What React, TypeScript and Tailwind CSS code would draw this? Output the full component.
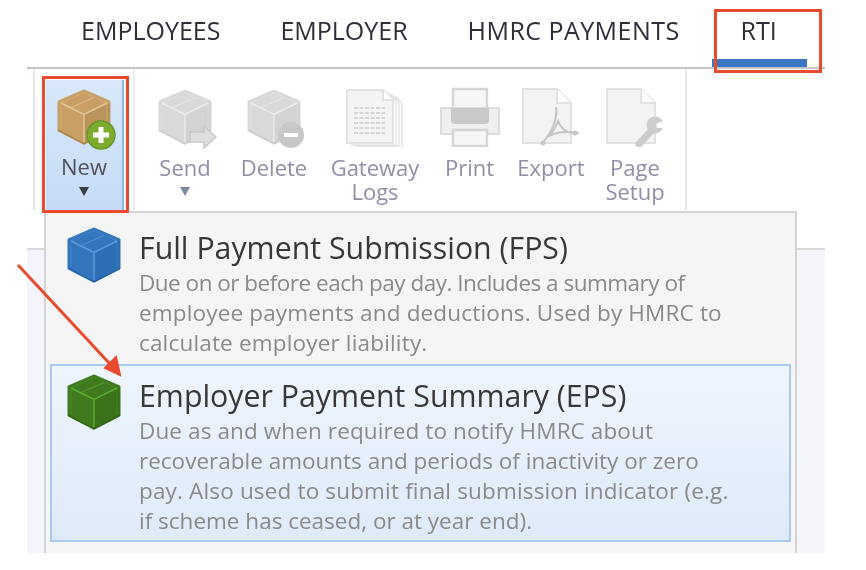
const font = { fontFamily: '"Open Sans", "Noto Sans", sans-serif' };

const Cube = ({ fill, shade, line, className }: { fill: string; shade: string; line: string; className?: string }) => (
	<svg viewBox="0 0 54 56" className={className}>
		<path d="M27 2.5 L51.5 13 V41 L27 53.5 L2.5 41 V13 Z" fill={fill} stroke={fill} strokeWidth="4" strokeLinejoin="round" />
		<path d="M27 26 L53 14 V41 L27 55 Z" fill={shade} opacity="0.3" />
		<path d="M1 41 L27 55 L53 41" fill="none" stroke={shade} strokeWidth="1.5" opacity="0.7" />
		<path d="M4 14 L27 25.5 L50 14 M27 25.5 V53" fill="none" stroke={line} strokeWidth="1.4" />
		<path d="M4 14 L27 3.5 L50 14 M50 14 V40 M4 14 V40" fill="none" stroke={line} strokeWidth="1" opacity="0.35" />
		<path d="M13 19 L37 8.5" fill="none" stroke={line} strokeWidth="1.1" opacity="0.7" />
	</svg>
);

const GreyCube = () => <Cube className="w-[54px] h-[56px]" fill="#d9d9d9" shade="#c8c8c8" line="#ececec" />;

const Doc = ({ children }: { children?: React.ReactNode }) => (
	<svg viewBox="0 0 60 60" className="w-[60px] h-[60px]">
		<path d="M2 2 L36 2 L50 16 L50 56 L2 56 Z" fill="#f3f3f3" stroke="#e2e2e2" strokeWidth="2" />
		<path d="M36 2 L36 16 L50 16" fill="#ffffff" stroke="#e2e2e2" strokeWidth="2" />
		{children}
	</svg>
);

const RibbonButton = ({ icon, label, caret, width }: { icon: React.ReactNode; label: string[]; caret?: boolean; width: string }) => (
	<div className={`flex flex-col items-center flex-none ${width} text-[22px] leading-[24px] text-[#8e90a8]`}>
		<div className="h-[60px] flex items-center justify-center">{icon}</div>
		<div className="mt-[8px] text-center">
			{label.map((l) => (
				<div key={l}>{l}</div>
			))}
		</div>
		{caret && <div className="mt-[8px] w-0 h-0 border-x-[5px] border-x-transparent border-t-[9px] border-t-[#8088a0]" />}
	</div>
);

type Line = { text: string; tracking: string };

const MenuItem = ({ cube, title, lines, active }: { cube: React.ReactNode; title: string; lines: Line[]; active?: boolean }) => (
	<div className={active ? "flex px-[15px] pt-[10px] h-[178px] border-2 border-[#a9c9f2] bg-linear-to-b from-[#eef5fd] to-[#dfeafa]" : "flex px-[17px] pt-[15px] h-[151px]"}>
		<div className="w-[72px] flex-none">{cube}</div>
		<div>
			<div className="text-[30.3px] leading-[40px] text-[#383838] whitespace-nowrap">{title}</div>
			<div className="text-[22.5px] leading-[30px] text-[#8a8a8a] whitespace-nowrap">
				{lines.map((l) => (
					<div key={l.text} className={l.tracking}>
						{l.text}
					</div>
				))}
			</div>
		</div>
	</div>
);

export default function App() {
	return (
		<div className="relative w-[866px] h-[570px] bg-white overflow-hidden blur-[0.6px]" style={font}>
			<div className="ml-[27px] w-[798px] h-[553px] flex flex-col">
				<div className="h-[69px] flex-none flex gap-[61px] pl-[54px] pt-[13px] border-b-2 border-[#c6c6c6] text-[25px] leading-[34px] text-[#2f2f3a] whitespace-nowrap">
					<span>EMPLOYEES</span>
					<span className="-ml-[1px]">EMPLOYER</span>
					<span className="-ml-[1px] tracking-[0.45px]">HMRC PAYMENTS</span>
					<span>RTI</span>
				</div>
				<div className="h-[181px] flex-none border-b-2 border-[#d8d8d8]">
					<div className="ml-[6px] w-[654px] h-[141px] flex border-l-2 border-r-2 border-[#e6e6e6]">
						<div className="ml-[11px] mt-[11px] w-[78px] h-[130px] flex-none flex flex-col items-center bg-linear-to-b from-[#d9e8fa] to-[#c4dbf7] border-r-2 border-[#8fb5ea] text-[22px] leading-[24px] text-[#50505c]">
							<div className="relative mt-[9px] w-[54px] h-[56px]">
								<Cube className="w-[54px] h-[56px]" fill="#c8a066" shade="#a07a42" line="#e2c698" />
								<svg viewBox="0 0 30 30" className="absolute left-[29px] top-[31px] w-[30px] h-[30px]">
									<circle cx="15" cy="15" r="14" fill="#7cab2e" />
									<circle cx="15" cy="15" r="14" fill="none" stroke="#6a9628" strokeWidth="1.5" />
									<path d="M15 7 V23 M7 15 H23" stroke="#ffffff" strokeWidth="5" />
								</svg>
							</div>
							<div className="mt-[9px]">New</div>
							<div className="mt-[9px] w-0 h-0 border-x-[5px] border-x-transparent border-t-[9px] border-t-[#3c3c44]" />
						</div>
						<div className="ml-[9px] w-[2px] h-full flex-none bg-[#ececec]" />
						<div className="flex pl-[5px] pt-[18px]">
							<RibbonButton
								width="w-[90px]"
								label={["Send"]}
								caret
								icon={
									<div className="relative w-[54px] h-[56px]">
										<GreyCube />
										<svg viewBox="0 0 28 24" className="absolute left-[31px] top-[36px] w-[28px] h-[24px]">
											<path d="M1 7 H15 V1 L27 12 L15 23 V17 H1 Z" fill="#dedede" stroke="#c9c9c9" strokeWidth="1.5" />
										</svg>
									</div>
								}
							/>
							<RibbonButton
								width="w-[88px]"
								label={["Delete"]}
								icon={
									<div className="relative w-[54px] h-[56px]">
										<GreyCube />
										<svg viewBox="0 0 28 28" className="absolute left-[30px] top-[32px] w-[28px] h-[28px]">
											<circle cx="14" cy="14" r="13" fill="#c8c8c8" />
											<path d="M7 14 H21" stroke="#ffffff" strokeWidth="4" />
										</svg>
									</div>
								}
							/>
							<RibbonButton
								width="w-[114px]"
								label={["Gateway", "Logs"]}
								icon={
									<svg viewBox="0 0 60 60" className="w-[60px] h-[60px]">
										<path d="M2 3 L38 3 L48 13 L48 56 L2 56 Z" fill="#f4f4f4" stroke="#e2e2e2" strokeWidth="2" />
										<path d="M38 3 L38 13 L48 13" fill="#ffffff" stroke="#e2e2e2" strokeWidth="2" />
										<path d="M42 5 L51 14 V58 H6 M46 7 L54 15 V59 H10 M50 9 L57 16 V60 H14" fill="none" stroke="#e4e4e4" strokeWidth="1.5" />
										<path d="M9 21 H40 M9 26 H40 M9 31 H40 M9 36 H40 M9 41 H40 M9 46 H40" stroke="#cccccc" strokeWidth="1.5" strokeDasharray="4 1.5" />
									</svg>
								}
							/>
							<RibbonButton
								width="w-[75px]"
								label={["Print"]}
								icon={
									<svg viewBox="0 0 60 60" className="w-[60px] h-[60px]">
										<path d="M13 2 H47 V26 H13 Z" fill="#f6f6f6" stroke="#d6d6d6" strokeWidth="2.5" />
										<path d="M1 21 H59 V47 H1 Z" fill="#efefef" stroke="#dcdcdc" strokeWidth="2" strokeLinejoin="round" />
										<path d="M11 21 H49 V33 Q49 37 45 37 H15 Q11 37 11 33 Z" fill="#c9c9c9" />
										<path d="M13 43 H47 V59 H13 Z" fill="#f6f6f6" stroke="#d6d6d6" strokeWidth="2.5" />
									</svg>
								}
							/>
							<RibbonButton
								width="w-[88px]"
								label={["Export"]}
								icon={
									<Doc>
										<path d="M35 21 C37 34 29 47 21 57 M26 50 C33 46 36 36 37 34 C39 40 45 46 52 46 M26 50 C36 44 46 44 57 46" fill="none" stroke="#c4c4c4" strokeWidth="2" strokeLinecap="round" />
										<circle cx="54" cy="46" r="2.5" fill="#c8c8c8" />
										<circle cx="22" cy="56" r="2.5" fill="#c8c8c8" />
									</Doc>
								}
							/>
							<RibbonButton
								width="w-[80px]"
								label={["Page", "Setup"]}
								icon={
									<Doc>
										<path d="M34 57 L48 42" fill="none" stroke="#cdcdcd" strokeWidth="7" strokeLinecap="round" />
										<circle cx="50" cy="38" r="8.5" fill="#cdcdcd" />
										<path d="M51 37 L60 33 V41 L52 41 Z" fill="#ffffff" />
									</Doc>
								}
							/>
						</div>
					</div>
				</div>
				<div className="flex-1 bg-[#f3f5fa]" />
			</div>

			<div className="absolute left-[44px] top-[211px] w-[753px] h-[342px] bg-[#f5f5f5] border-x-2 border-t-2 border-[#d4d4d4]">
				<div className="px-[4px]">
					<MenuItem
						cube={<Cube className="w-[54px] h-[56px] -mt-[1px]" fill="#3276bd" shade="#235f9e" line="#5c9cdc" />}
						title="Full Payment Submission (FPS)"
						lines={[
							{ text: "Due on or before each pay day. Includes a summary of", tracking: "tracking-[-0.5px]" },
							{ text: "employee payments and deductions. Used by HMRC to", tracking: "tracking-[0.16px]" },
							{ text: "calculate employer liability.", tracking: "tracking-[0.17px]" },
						]}
					/>
					<MenuItem
						active
						cube={<Cube className="w-[54px] h-[56px] -mt-[2px]" fill="#3f7a1e" shade="#2f6012" line="#5cae2e" />}
						title="Employer Payment Summary (EPS)"
						lines={[
							{ text: "Due as and when required to notify HMRC about", tracking: "tracking-[0.11px]" },
							{ text: "recoverable amounts and periods of inactivity or zero", tracking: "tracking-normal" },
							{ text: "pay. Also used to submit final submission indicator (e.g.", tracking: "tracking-[0.16px]" },
							{ text: "if scheme has ceased, or at year end).", tracking: "tracking-normal" },
						]}
					/>
				</div>
			</div>

			{/* annotations */}
			<div className="absolute left-[712px] top-[59px] w-[95px] h-[8px] bg-[#3a76c4]" />
			<div className="absolute left-[714px] top-[9px] w-[108px] h-[64px] border-[3px] border-[#ea4a2e]" />
			<div className="absolute left-[42px] top-[76px] w-[87px] h-[137px] border-[3px] border-[#ea4a2e]" />
			<svg viewBox="0 0 130 120" className="absolute left-[10px] top-[260px] w-[130px] h-[120px]">
				<path d="M8 5 L100 104" stroke="#ea4a2e" strokeWidth="3" />
				<path d="M110 115 L95 108 L106 97 Z" fill="#ea4a2e" stroke="#ea4a2e" strokeWidth="2" />
			</svg>
		</div>
	);
}
